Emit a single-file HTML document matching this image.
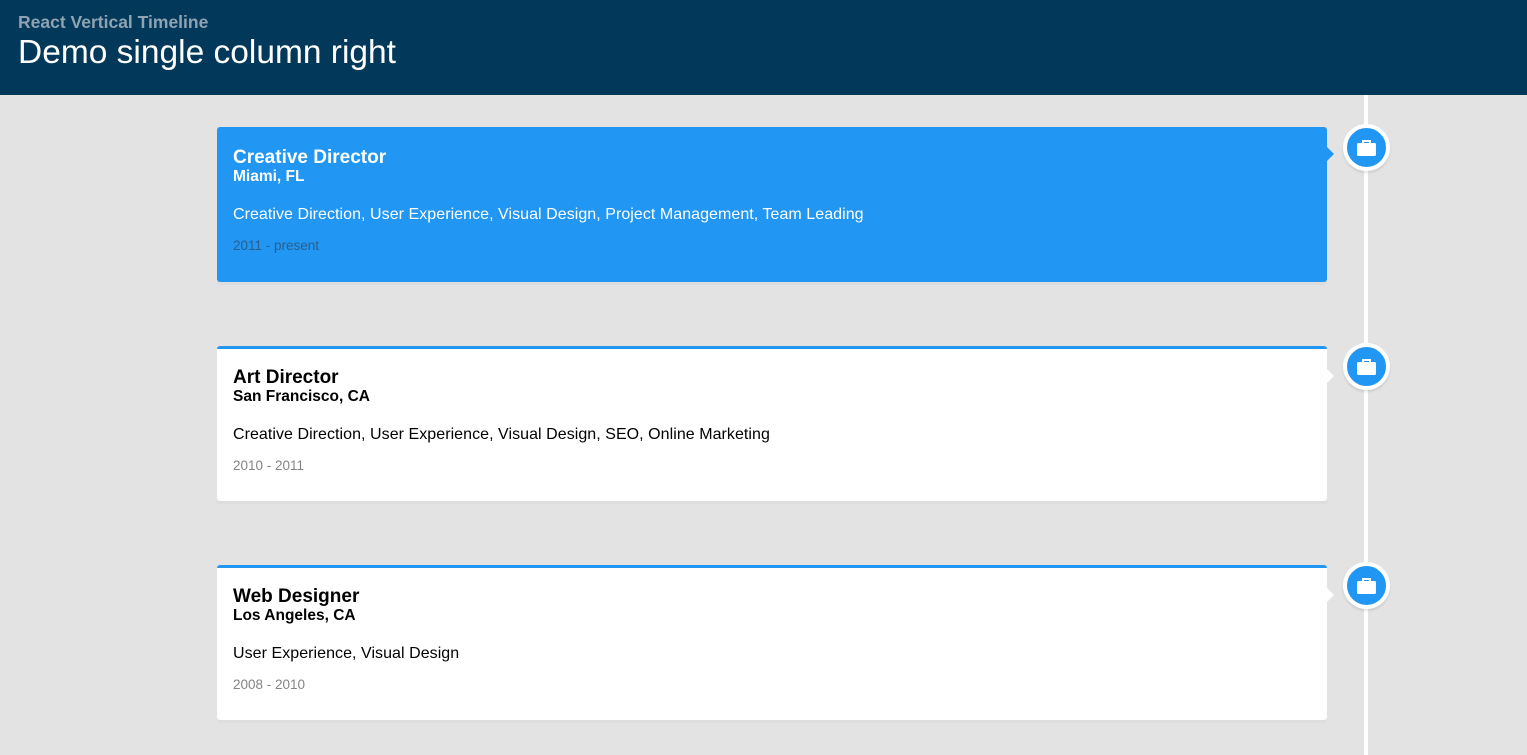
<!DOCTYPE html>
<html><head><meta charset="utf-8"><style>
*{margin:0;padding:0;box-sizing:border-box}
body{width:1527px;height:755px;overflow:hidden;background:#e3e3e3;font-family:"Liberation Sans",sans-serif;position:relative}
.hdr{position:absolute;left:0;top:0;width:1527px;height:95px;background:#023859}
.hdr .a{position:absolute;left:18px;top:12px;font-size:17.5px;font-weight:bold;color:#8fa3b3}
.hdr .b{position:absolute;left:18px;top:34px;font-size:33.5px;color:#fff}
.line{position:absolute;left:1364px;top:95px;width:4px;height:660px;background:#fff}
.card{position:absolute;left:217px;width:1110px;height:155px;background:#fff;border-radius:3px;box-shadow:0 3px 0 #ddd;padding:20px 16px;color:#000}
.card.w{border-top:3px solid #2196f3;padding-top:18px}
.card.blue{background:#2196f3;color:#fff}
.card:after{content:"";position:absolute;right:-7px;top:20px;border:7px solid transparent;border-right:0;border-left-color:#fff}
.card.blue:after{border-left-color:#2196f3}
.t{font-size:19px;font-weight:bold;line-height:21px}
.s{font-size:15.5px;font-weight:bold;line-height:18px}
.d{font-size:16px;margin-top:19px;line-height:19px;letter-spacing:.05px}
.dt{font-size:13.5px;margin-top:14px;color:#777;opacity:.9}
.blue .dt{color:#2a5a85}
.ic{position:absolute;left:1343px;width:47px;height:47px;border-radius:50%;background:#2196f3;border:4px solid #fff;box-shadow:0 2px 2px rgba(0,0,0,.1)}
.ic svg{position:absolute;left:10px;top:10px}
</style></head><body>
<div class="hdr"><div class="a">React Vertical Timeline</div><div class="b">Demo single column right</div></div>
<div class="line"></div>

<div class="card blue" style="top:127px"><div class="t">Creative Director</div><div class="s">Miami, FL</div><div class="d">Creative Direction, User Experience, Visual Design, Project Management, Team Leading</div><div class="dt">2011 - present</div></div>
<div class="ic" style="top:124px"><svg width="19" height="19" viewBox="0 0 19 19"><path d="M6 5V3h7v2" stroke="#fff" stroke-width="2" fill="none"/><rect x="0" y="5" width="19" height="13" rx="1.5" fill="#fff"/></svg></div>

<div class="card w" style="top:346px"><div class="t">Art Director</div><div class="s">San Francisco, CA</div><div class="d">Creative Direction, User Experience, Visual Design, SEO, Online Marketing</div><div class="dt">2010 - 2011</div></div>
<div class="ic" style="top:343px"><svg width="19" height="19" viewBox="0 0 19 19"><path d="M6 5V3h7v2" stroke="#fff" stroke-width="2" fill="none"/><rect x="0" y="5" width="19" height="13" rx="1.5" fill="#fff"/></svg></div>

<div class="card w" style="top:565px"><div class="t">Web Designer</div><div class="s">Los Angeles, CA</div><div class="d">User Experience, Visual Design</div><div class="dt">2008 - 2010</div></div>
<div class="ic" style="top:562px"><svg width="19" height="19" viewBox="0 0 19 19"><path d="M6 5V3h7v2" stroke="#fff" stroke-width="2" fill="none"/><rect x="0" y="5" width="19" height="13" rx="1.5" fill="#fff"/></svg></div>
</body></html>
